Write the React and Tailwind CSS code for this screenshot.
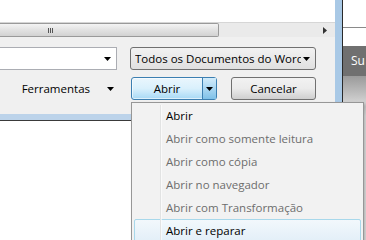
import React from "react";

const font = { fontFamily: '"Open Sans", "Noto Sans", "DejaVu Sans", sans-serif' };

function Caret({ className = "" }) {
  return (
    <svg width="7" height="4" viewBox="0 0 7 4" className={className}>
      <path d="M0 0h7L3.5 4z" fill="#000" />
    </svg>
  );
}

function Scrollbar() {
  return (
    <div className="flex h-[15px] bg-[#eaeaea] border-t border-[#d6d6d6]">
      <div className="relative w-[219px] h-[14px] rounded-r-[2px] border border-l-0 border-[#9a9a9a] bg-gradient-to-b from-[#f4f4f4] via-[#e2e2e2] to-[#d2d2d2]">
        <div className="absolute left-[48px] top-[4px] flex gap-[1px]">
          <span className="w-[1px] h-[5px] bg-[#555]" />
          <span className="w-[1px] h-[5px] bg-[#555]" />
          <span className="w-[1px] h-[5px] bg-[#555]" />
        </div>
      </div>
      <div className="flex-1 flex items-center justify-end pr-[8px]">
        <svg width="4" height="7" viewBox="0 0 4 7">
          <path d="M0 0l4 3.5L0 7z" fill="#333" />
        </svg>
      </div>
    </div>
  );
}

const items = [
  { label: "Abrir", on: true },
  { label: "Abrir como somente leitura" },
  { label: "Abrir como cópia" },
  { label: "Abrir no navegador" },
  { label: "Abrir com Transformação" },
  { label: "Abrir e reparar", on: true, hot: true },
];

function Menu() {
  return (
    <div className="absolute left-[131px] top-[102px] w-[233px] h-[150px] border border-[#979797] bg-[#f2f2f2] shadow-[2px_2px_3px_rgba(0,0,0,0.25)]">
      <div className="absolute left-[28px] top-[2px] bottom-0 w-[2px] border-l border-[#e2e3e3] bg-white/60" />
      <div className="flex flex-col pt-[1px] px-[2px]">
        {items.map((it) => (
          <div
            key={it.label}
            className={
              "h-[23px] flex items-center pl-[31px] rounded-[2px] " +
              (it.hot
                ? "border border-[#a8d8eb] bg-gradient-to-b from-[#f2f8fc] to-[#e3eff8]"
                : "border border-transparent") +
              (it.on ? " text-[#000]" : " text-[#6d6d6d]")
            }
          >
            {it.label}
          </div>
        ))}
      </div>
    </div>
  );
}

export default function App() {
  return (
    <div className="relative w-[366px] h-[240px] overflow-hidden bg-white text-[11.5px]" style={font}>
      <div className="flex h-full">
        {/* dialog */}
        <div className="w-[335px] flex flex-col">
          <div className="h-[22px] bg-white" />
          <Scrollbar />
          <div className="h-[77px] bg-[#f0f0f0] flex flex-col pt-[10px]">
            <div className="flex items-center h-[23px]">
              <div className="w-[117px] h-[23px] bg-white border border-l-0 border-[#abadb3] flex items-center justify-end pr-[5px]">
                <Caret />
              </div>
              <div className="ml-[13px] w-[186px] h-[23px] rounded-[3px] border border-[#707070] bg-gradient-to-b from-[#f2f2f2] to-[#e0e0e0] flex items-center pl-[4px] pr-[5px]">
                <span className="flex-1 overflow-hidden whitespace-nowrap text-[#000]">Todos os Documentos do Word</span>
                <Caret className="ml-[2px]" />
              </div>
            </div>
            <div className="flex items-center h-[23px] mt-[7px]">
              <div className="w-[131px] flex items-center justify-end pr-[17px]">
                <span className="text-[#000]">Ferramentas</span>
                <Caret className="ml-[17px]" />
              </div>
              <div className="w-[86px] h-[23px] rounded-[3px] border border-[#3c7fb1] bg-gradient-to-b from-[#eaf6fd] via-[#d9f0fc] to-[#a7d9f5] flex shadow-[inset_0_0_0_1px_rgba(255,255,255,0.6)]">
                <div className="flex-1 flex items-center justify-center text-[#000]">Abrir</div>
                <div className="w-[14px] border-l border-[#3c7fb1] flex items-center justify-center bg-gradient-to-b from-[#d2ecfb] to-[#7fc1e8]">
                  <Caret />
                </div>
              </div>
              <div className="ml-[14px] w-[85px] h-[23px] rounded-[3px] border border-[#707070] bg-gradient-to-b from-[#f2f2f2] via-[#ebebeb] to-[#cfcfcf] flex items-center justify-center text-[#000]">
                Cancelar
              </div>
            </div>
          </div>
          <div className="h-[6px] bg-[#bcd3ea]" />
          <div className="h-[1px] bg-[#3a3a3a]" />
          <div className="flex-1 bg-white" />
        </div>
        {/* window edge */}
        <div className="w-[7px] bg-[#a9c9e6]" />
        <div className="w-[1px] bg-[#2a2a2a]" />
        <div className="flex-1 flex flex-col bg-white">
          <div className="h-[28px] border-b border-[#8a8a8a]" />
          <div className="h-[18px]" />
          <div className="h-[30px] bg-[#707070] text-white flex items-center pl-[8px] text-[12px]">Su</div>
          <div className="h-[40px] bg-gradient-to-b from-[#9a9a9a] to-[#f0f0f0]" />
          <div className="flex-1 bg-[#f0f0f0]" />
        </div>
      </div>
      <Menu />
    </div>
  );
}
